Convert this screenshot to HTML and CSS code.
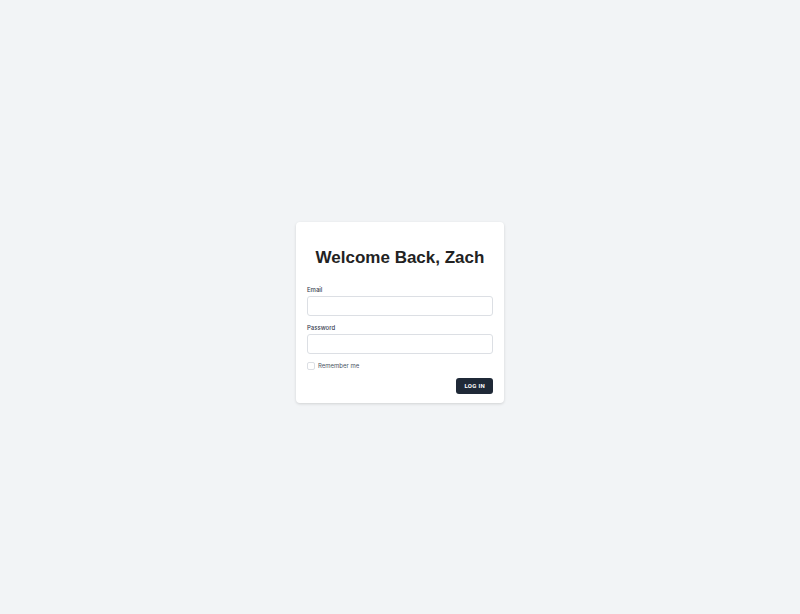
FILE: index.html
```html
<!DOCTYPE html>
<html lang="en">
<head>
  <meta charset="UTF-8" />
  <title>Log in</title>
  <meta name="viewport" content="width=device-width, initial-scale=1" />
  <link rel="stylesheet" href="styles.css">
</head>
<body>
  <main class="login-card">
    <h1 class="title">Welcome Back, Zach</h1>

    <form class="login-form">
      <div class="field">
        <label for="email">Email</label>
        <input class="text-input" id="email" type="email" name="email" required />
      </div>

      <div class="field">
        <label for="password">Password</label>
        <input class="text-input" id="password" type="password" name="password" required />
      </div>

      <label class="remember" for="remember">
        <input id="remember" type="checkbox" name="remember" />
        Remember me
      </label>

      <div class="actions">
        <button class="login-btn" type="submit">LOG IN</button>
      </div>
    </form>
  </main>
</body>
</html>
```

FILE: styles.css
```css
* {
  box-sizing: border-box;
}

body {
  margin: 0;
  min-height: 100vh;
  padding-top: 11px;
  display: flex;
  align-items: center;
  justify-content: center;
  background: #f2f4f6;
  font-family: Inter, "Open Sans", sans-serif;
}

.login-card {
  width: 100%;
  max-width: 208px;
  padding: 25px 11px 9px;
  background: white;
  border-radius: 4px;
  box-shadow: 0 1px 3px rgba(0, 0, 0, 0.14);
}

.title {
  margin: 0 0 17px;
  font-family: "Liberation Sans", Arial, sans-serif;
  font-size: 17px;
  line-height: 22px;
  text-align: center;
  color: #222;
}

.field {
  margin-bottom: 8px;
}

.field label {
  display: block;
  margin-bottom: 2px;
  font-size: 6px;
  font-weight: 500;
  line-height: 8px;
  color: #374151;
}

.text-input {
  display: block;
  width: 100%;
  height: 20px;
  padding: 4px 6px;
  font: inherit;
  font-size: 8px;
  background: white;
  border: 1px solid #dcdfe4;
  border-radius: 3px;
}

.text-input:focus {
  outline: none;
  border-color: #a5b4fc;
}

.remember {
  display: flex;
  align-items: center;
  gap: 3px;
  width: fit-content;
  font-size: 6px;
  line-height: 8px;
  color: #4b5563;
}

.remember input {
  appearance: none;
  width: 8px;
  height: 8px;
  margin: 0;
  background: white;
  border: 1px solid #dcdfe4;
  border-radius: 2px;
}

.remember input:checked {
  background: #4f46e5;
}

.actions {
  display: flex;
  justify-content: flex-end;
  margin-top: 8px;
}

.login-btn {
  padding: 4px 8px;
  font-family: Roboto, sans-serif;
  font-size: 6px;
  font-weight: bold;
  line-height: 8px;
  letter-spacing: 0.05em;
  color: white;
  background: #1f2937;
  border: none;
  border-radius: 3px;
  cursor: pointer;
}

.login-btn:hover {
  background: #374151;
}
```
